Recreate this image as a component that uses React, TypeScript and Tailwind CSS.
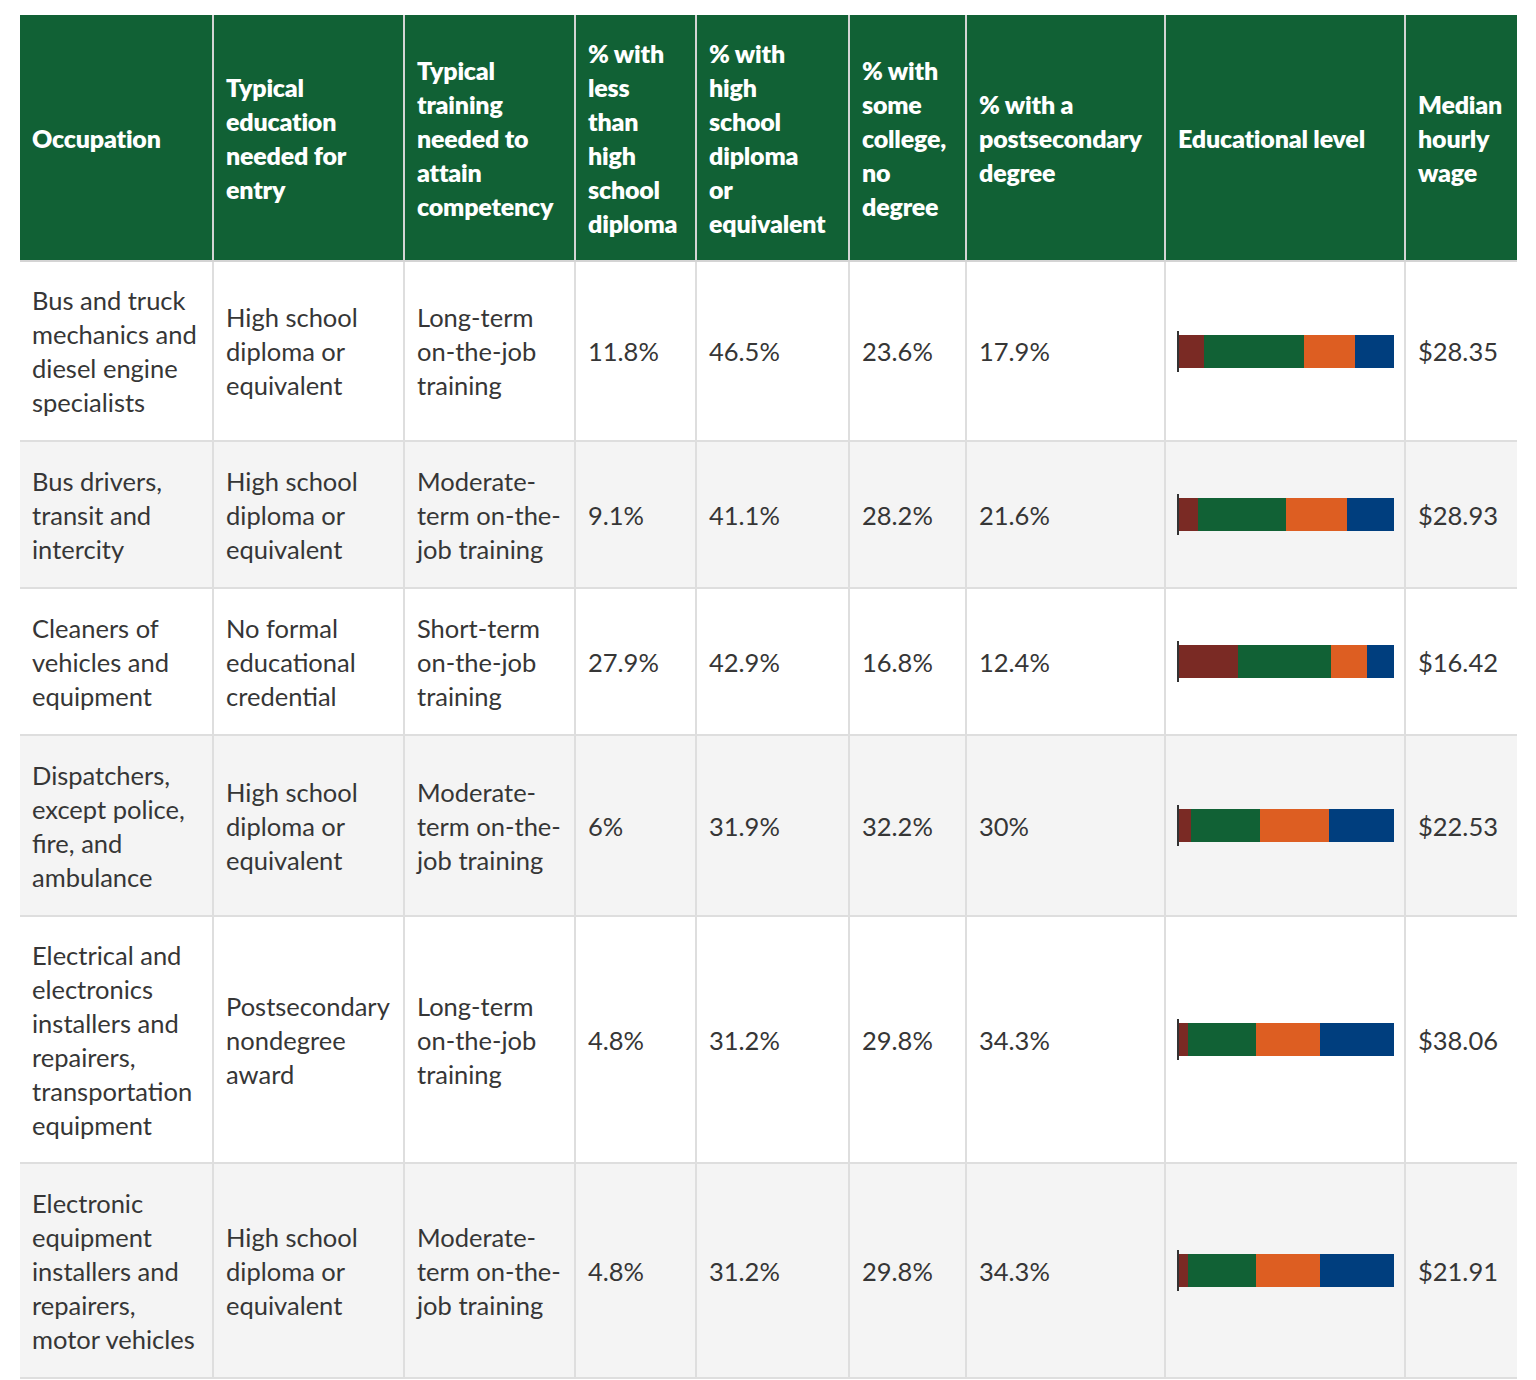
import React from 'react';

type Row = {
  occupation: string[];
  education: string[];
  training: string[];
  pcts: [number, number, number, number];
  labels: [string, string, string, string];
  wage: string;
  height: string;
};

const headers: string[][] = [
  ['Occupation'],
  ['Typical', 'education', 'needed for', 'entry'],
  ['Typical', 'training', 'needed to', 'attain', 'competency'],
  ['% with', 'less', 'than', 'high', 'school', 'diploma'],
  ['% with', 'high', 'school', 'diploma', 'or', 'equivalent'],
  ['% with', 'some', 'college,', 'no', 'degree'],
  ['% with a', 'postsecondary', 'degree'],
  ['Educational level'],
  ['Median', 'hourly', 'wage'],
];

const colWidths = ['w-[193px]', 'w-[191px]', 'w-[171px]', 'w-[121px]', 'w-[153px]', 'w-[117px]', 'w-[199px]', 'w-[240px]', 'w-[112px]'];

const hsDiploma = ['High school', 'diploma or', 'equivalent'];
const longTerm = ['Long-term', 'on-the-job', 'training'];
const moderate = ['Moderate-', 'term on-the-', 'job training'];

const rows: Row[] = [
  {
    occupation: ['Bus and truck', 'mechanics and', 'diesel engine', 'specialists'],
    education: hsDiploma,
    training: longTerm,
    pcts: [11.8, 46.5, 23.6, 17.9],
    labels: ['11.8%', '46.5%', '23.6%', '17.9%'],
    wage: '$28.35',
    height: 'h-[180px]',
  },
  {
    occupation: ['Bus drivers,', 'transit and', 'intercity'],
    education: hsDiploma,
    training: moderate,
    pcts: [9.1, 41.1, 28.2, 21.6],
    labels: ['9.1%', '41.1%', '28.2%', '21.6%'],
    wage: '$28.93',
    height: 'h-[147px]',
  },
  {
    occupation: ['Cleaners of', 'vehicles and', 'equipment'],
    education: ['No formal', 'educational', 'credential'],
    training: ['Short-term', 'on-the-job', 'training'],
    pcts: [27.9, 42.9, 16.8, 12.4],
    labels: ['27.9%', '42.9%', '16.8%', '12.4%'],
    wage: '$16.42',
    height: 'h-[147px]',
  },
  {
    occupation: ['Dispatchers,', 'except police,', 'fire, and', 'ambulance'],
    education: hsDiploma,
    training: moderate,
    pcts: [6, 31.9, 32.2, 30],
    labels: ['6%', '31.9%', '32.2%', '30%'],
    wage: '$22.53',
    height: 'h-[181px]',
  },
  {
    occupation: ['Electrical and', 'electronics', 'installers and', 'repairers,', 'transportation', 'equipment'],
    education: ['Postsecondary', 'nondegree', 'award'],
    training: longTerm,
    pcts: [4.8, 31.2, 29.8, 34.3],
    labels: ['4.8%', '31.2%', '29.8%', '34.3%'],
    wage: '$38.06',
    height: 'h-[247px]',
  },
  {
    occupation: ['Electronic', 'equipment', 'installers and', 'repairers,', 'motor vehicles'],
    education: hsDiploma,
    training: moderate,
    pcts: [4.8, 31.2, 29.8, 34.3],
    labels: ['4.8%', '31.2%', '29.8%', '34.3%'],
    wage: '$21.91',
    height: 'h-[215px]',
  },
];

const barColors = ['bg-[#7a2a24]', 'bg-[#116135]', 'bg-[#dd5e22]', 'bg-[#003e7e]'];

const Lines: React.FC<{ lines: string[] }> = ({ lines }) => (
  <>
    {lines.map((l, i) => (
      <div key={i} className="whitespace-nowrap">
        {l}
      </div>
    ))}
  </>
);

const EduBar: React.FC<{ pcts: number[] }> = ({ pcts }) => {
  const total = pcts.reduce((a, b) => a + b, 0);
  return (
    <div className="relative flex h-[33px] w-[216px]">
      <div className="absolute -left-[1px] -top-[4px] h-[41px] w-[2px] bg-[#333]" />
      {pcts.map((p, i) => (
        <div key={i} className={`h-full ${barColors[i]}`} style={{ width: `${(p / total) * 100}%` }} />
      ))}
    </div>
  );
};

export default function App() {
  const cell = 'border-2 border-[#dedede] px-3 align-middle first:border-l-0 last:border-r-0';
  return (
    <div className="min-h-[1380px] bg-white pl-[20px] pt-[15px] font-['Lato','Open_Sans',sans-serif]">
      <table className="w-[1497px] table-fixed border-collapse">
        <colgroup>
          {colWidths.map((w, i) => (
            <col key={i} className={w} />
          ))}
        </colgroup>
        <thead>
          <tr className="h-[246px] bg-[#116135]">
            {headers.map((h, i) => (
              <th
                key={i}
                className="border-2 border-t-0 border-[#d4d4d4] px-3 text-left align-middle text-[25px] font-extrabold leading-[34px] tracking-[-0.2px] text-white first:border-l-0 last:border-r-0"
              >
                <Lines lines={h} />
              </th>
            ))}
          </tr>
        </thead>
        <tbody className="text-[25.5px] leading-[34px] text-[#363636]">
          {rows.map((r, i) => (
            <tr key={i} className={`${r.height} ${i % 2 === 1 ? 'bg-[#f4f4f4]' : 'bg-white'}`}>
              <td className={cell}>
                <Lines lines={r.occupation} />
              </td>
              <td className={cell}>
                <Lines lines={r.education} />
              </td>
              <td className={cell}>
                <Lines lines={r.training} />
              </td>
              {r.labels.map((l, j) => (
                <td key={j} className={cell}>
                  {l}
                </td>
              ))}
              <td className={cell}>
                <EduBar pcts={r.pcts} />
              </td>
              <td className={cell}>{r.wage}</td>
            </tr>
          ))}
        </tbody>
      </table>
    </div>
  );
}
